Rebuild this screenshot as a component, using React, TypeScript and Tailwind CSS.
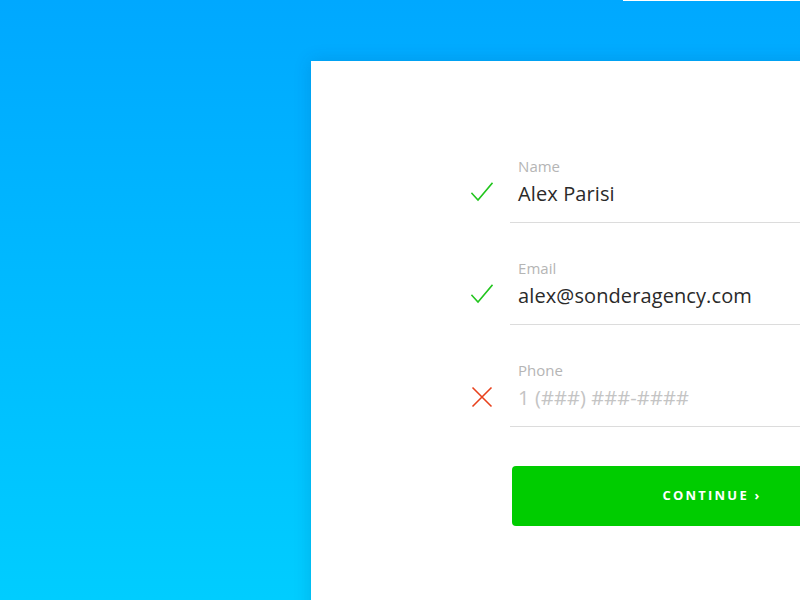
import React from "react";

function Check() {
  return (
    <svg width="22" height="22" viewBox="0 0 22 22" fill="none">
      <path d="M1 11.5 L7 18 L21 1.5" stroke="#22c51e" strokeWidth="1.6" strokeLinecap="square" />
    </svg>
  );
}

function Cross() {
  return (
    <svg width="22" height="22" viewBox="0 0 22 22" fill="none">
      <path d="M1.5 1.5 L20.5 20.5 M20.5 1.5 L1.5 20.5" stroke="#e8411c" strokeWidth="1.6" />
    </svg>
  );
}

function Field({ label, value, placeholder, ok }: { label: string; value?: string; placeholder?: string; ok: boolean }) {
  return (
    <div className="flex">
      <div className="w-[41px] flex items-start pt-[26px]">{ok ? <Check /> : <Cross />}</div>
      <div className="w-[420px] border-b border-[#dcdcdc] pl-2 pb-[14px]">
        <div className="text-[15px] leading-[20px] text-[#b5b5b5]">{label}</div>
        <div className={"mt-1 text-[20px] leading-[28px] tracking-[0.1px] " + (value ? "text-[#2a2a2a]" : "text-[#c4c4c4]")}>
          {value ?? placeholder}
        </div>
      </div>
    </div>
  );
}

export default function App() {
  return (
    <div
      className="relative w-[800px] h-[600px] overflow-hidden bg-gradient-to-b from-[#00a8ff] to-[#00cdff]"
      style={{ fontFamily: '"Open Sans", "Noto Sans", sans-serif' }}
    >
      <div className="absolute left-[623px] top-0 w-[200px] h-[1px] bg-white" />
      <div className="ml-[311px] mt-[61px] w-[600px] h-[560px] bg-white shadow-[0_0_16px_rgba(0,60,120,0.18)] pl-[160px] pt-[95px]">
        <div className="flex flex-col gap-[35px]">
          <Field label="Name" value="Alex Parisi" ok />
          <Field label="Email" value="alex@sonderagency.com" ok />
          <Field label="Phone" placeholder="1 (###) ###-####" ok={false} />
        </div>
        <div className="ml-[41px] mt-[39px] w-[400px] h-[60px] rounded-[4px] bg-[#00cc00] flex items-center justify-center">
          <span className="text-white text-[13px] font-bold tracking-[0.17em]">CONTINUE ›</span>
        </div>
      </div>
    </div>
  );
}
